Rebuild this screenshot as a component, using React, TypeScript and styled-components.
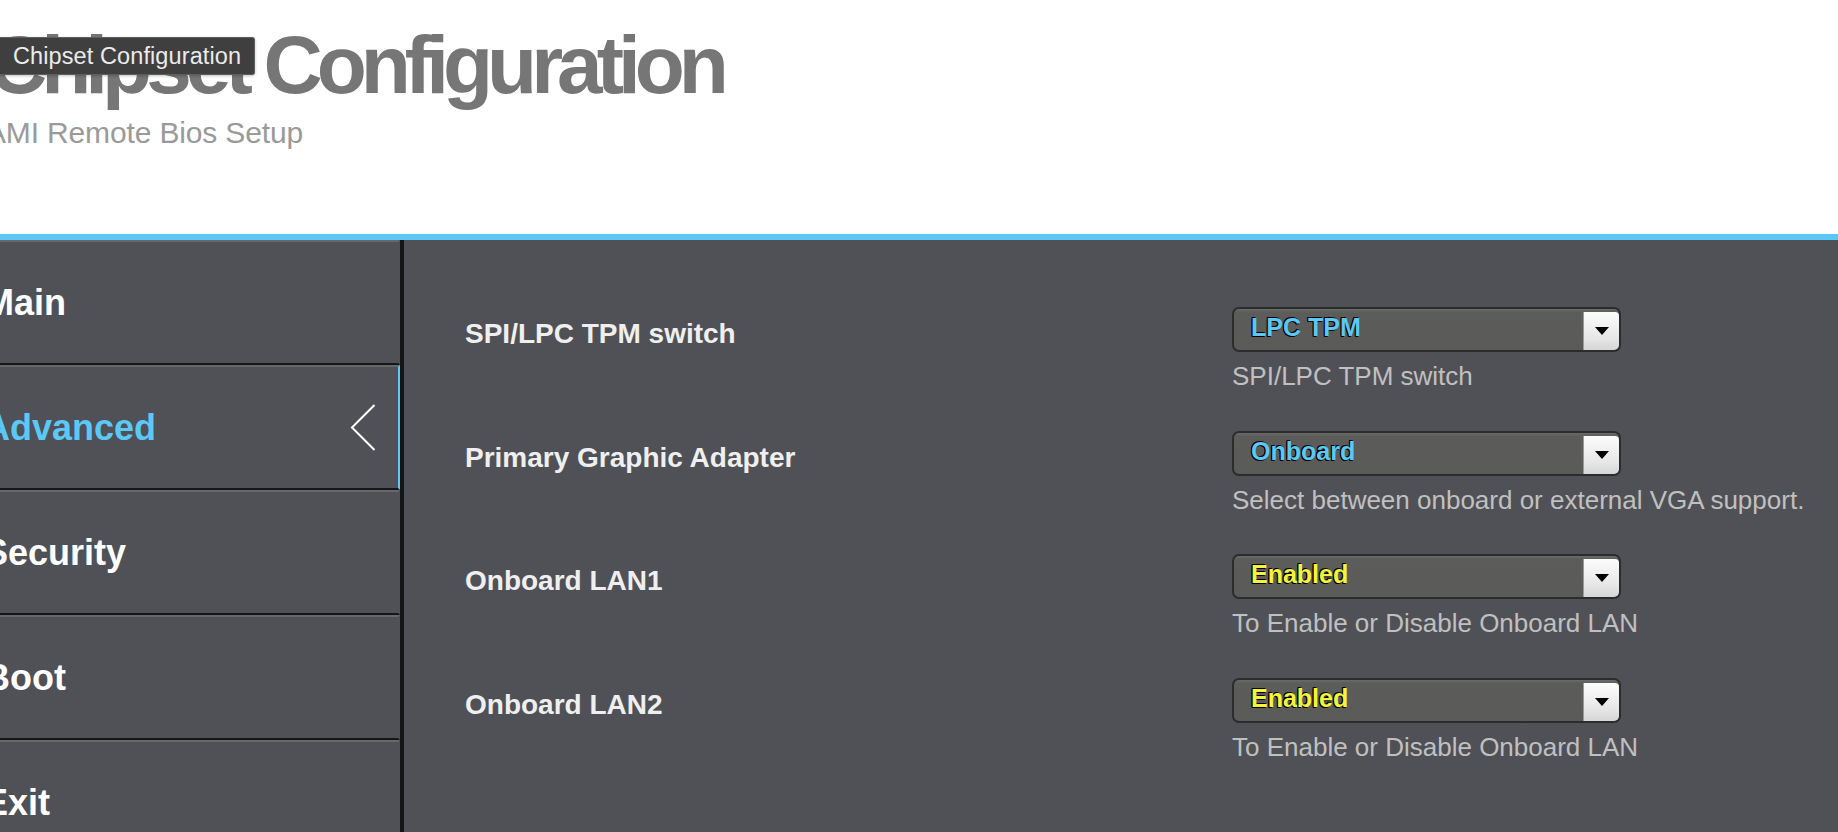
import React from "react";
import styled, { createGlobalStyle } from "styled-components";

const GlobalStyle = createGlobalStyle`
  html, body {
    margin: 0;
    padding: 0;
    background: #ffffff;
    overflow: hidden;
  }
  body {
    font-family: "Liberation Sans", Arial, Helvetica, sans-serif;
  }
  * { box-sizing: border-box; }
`;

const Page = styled.div`
  position: relative;
  width: 100%;
  height: 832px;
  overflow: hidden;
`;

const Scrolled = styled.div`
  margin-left: -40px;
  width: calc(100% + 40px);
`;

const Header = styled.header`
  height: 240px;
  background: #ffffff;
  border-bottom: 6px solid #5bc8f5;
  padding: 24px 0 0 28px;
`;

const Title = styled.h1`
  margin: 0;
  font-size: 82px;
  line-height: 82px;
  font-weight: 700;
  letter-spacing: -6px;
  color: #767676;
  white-space: nowrap;
`;

const Subtitle = styled.div`
  margin: 12px 0 0 -2px;
  font-size: 30px;
  line-height: 30px;
  color: #9a9a9a;
  letter-spacing: -0.15px;
`;

const Tooltip = styled.div`
  position: absolute;
  left: 0;
  top: 37px;
  height: 38px;
  padding: 0 13px;
  background: #3e3f3e;
  border: 1px solid #5e5e5e;
  border-left: none;
  border-radius: 0 3px 3px 0;
  color: #ebebeb;
  font-size: 23.5px;
  line-height: 36px;
  letter-spacing: 0.1px;
  white-space: nowrap;
  box-shadow: 0 1px 3px rgba(0, 0, 0, 0.25);
`;

const Body = styled.div`
  display: flex;
  background: #505157;
  min-height: 600px;
`;

const Sidebar = styled.nav`
  width: 444px;
  flex: none;
  border-right: 4px solid #141414;
  display: flex;
  flex-direction: column;
`;

const MenuItem = styled.div<{ $active?: boolean }>`
  height: 125px;
  display: flex;
  align-items: center;
  justify-content: space-between;
  padding: 0 22px 0 24px;
  border-top: 2px solid #67686b;
  border-bottom: 2px solid #161617;
  border-right: 2px solid ${(p) => (p.$active ? "#5bc8f5" : "transparent")};
  color: ${(p) => (p.$active ? "#5bc8f5" : "#ffffff")};
  font-size: 36px;
  font-weight: 700;
`;

const Content = styled.main`
  flex: 1;
  padding: 67px 0 0 61px;
`;

const Row = styled.div`
  display: grid;
  grid-template-columns: 767px 1fr;
  height: 123.5px;
`;

const Label = styled.div`
  padding-top: 4px;
  font-size: 28px;
  font-weight: 700;
  line-height: 45px;
  color: #efefef;
  white-space: nowrap;
`;

const Control = styled.div`
  display: flex;
  flex-direction: column;
`;

const SelectBox = styled.div`
  width: 389px;
  height: 45px;
  display: flex;
  align-items: stretch;
  border: 2px solid #2b2c2d;
  border-radius: 7px;
  background: linear-gradient(#6b6c6a 0, #5c5d5b 3px, #5a5b59 100%);
  overflow: hidden;
`;

const SelectValue = styled.div<{ $color: string }>`
  flex: 1;
  padding-left: 17px;
  font-size: 25px;
  font-weight: 700;
  line-height: 37px;
  color: ${(p) => p.$color};
  text-shadow: -1px -1px 0 #000, -1px 0 0 #000, -1px 1px 0 #000;
  white-space: nowrap;
`;

const SelectButton = styled.div`
  width: 36px;
  margin: 3px 0 0 0;
  display: flex;
  align-items: center;
  justify-content: center;
  background: linear-gradient(#fcfcfc, #e6e6e6 70%, #d6d6d6);
  border-left: 1px solid #9a9a9a;
  border-radius: 0 4px 4px 0;
`;

const Description = styled.div`
  margin-top: 9px;
  font-size: 26px;
  line-height: 30px;
  color: #c0c0c0;
  white-space: nowrap;
`;

const Caret = () => (
  <svg width="14" height="8" viewBox="0 0 14 8">
    <path d="M0 0 H14 L7 8 Z" fill="#000" />
  </svg>
);

const Chevron = () => (
  <svg width="26" height="48" viewBox="0 0 26 48">
    <path d="M24.5 1 L2 23.5 L24.5 46" fill="none" stroke="#ffffff" strokeWidth="2" />
  </svg>
);

const menu = ["Main", "Advanced", "Security", "Boot", "Exit"];

const rows = [
  { label: "SPI/LPC TPM switch", value: "LPC TPM", color: "#5bc8f5", desc: "SPI/LPC TPM switch" },
  { label: "Primary Graphic Adapter", value: "Onboard", color: "#5bc8f5", desc: "Select between onboard or external VGA support." },
  { label: "Onboard LAN1", value: "Enabled", color: "#f4f43a", desc: "To Enable or Disable Onboard LAN" },
  { label: "Onboard LAN2", value: "Enabled", color: "#f4f43a", desc: "To Enable or Disable Onboard LAN" },
];

export default function App() {
  return (
    <Page>
      <GlobalStyle />
      <Scrolled>
        <Header>
          <Title>Chipset Configuration</Title>
          <Subtitle>AMI Remote Bios Setup</Subtitle>
        </Header>
        <Body>
          <Sidebar>
            {menu.map((m) => (
              <MenuItem key={m} $active={m === "Advanced"}>
                <span>{m}</span>
                {m === "Advanced" && <Chevron />}
              </MenuItem>
            ))}
          </Sidebar>
          <Content>
            {rows.map((r) => (
              <Row key={r.label}>
                <Label>{r.label}</Label>
                <Control>
                  <SelectBox>
                    <SelectValue $color={r.color}>{r.value}</SelectValue>
                    <SelectButton>
                      <Caret />
                    </SelectButton>
                  </SelectBox>
                  <Description>{r.desc}</Description>
                </Control>
              </Row>
            ))}
          </Content>
        </Body>
      </Scrolled>
      <Tooltip>Chipset Configuration</Tooltip>
    </Page>
  );
}
